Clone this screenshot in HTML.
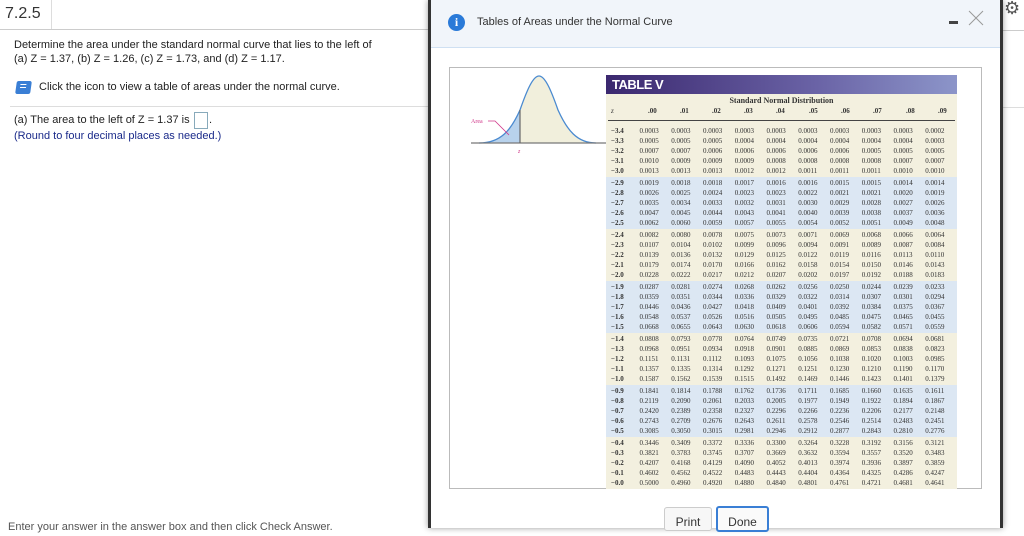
<!DOCTYPE html>
<html><head><meta charset="utf-8"><style>
*{margin:0;padding:0;box-sizing:border-box}
body{width:1024px;height:528px;overflow:hidden;background:#fff;font-family:"Liberation Sans",sans-serif;position:relative}
.a{position:absolute}
.t{font-size:11px;color:#222;white-space:nowrap}
table{border-collapse:collapse;font-family:"Liberation Serif",serif;font-size:7px;color:#333}
td{height:10px;line-height:10px;padding:0;text-align:left;width:32.2px}
td.z{width:34px;font-weight:bold;padding-left:5px}
tbody.c{background:#f3f0df}
tbody.b{background:#dce7f3}
tbody tr:first-child td{padding-top:1px}
tbody tr:last-child td{padding-bottom:1px}
</style></head><body>
<div class="a" style="left:0;top:0;width:52px;height:29px;border-right:1px solid #ddd"></div>
<div class="a" style="left:5px;top:5px;font-size:16px;color:#333">7.2.5</div>
<div class="a" style="left:0;top:29px;width:430px;height:1px;background:#ccc"></div>
<div class="a t" style="left:14px;top:39px">Determine the area under the standard normal curve that lies to the left of</div>
<div class="a t" style="left:14px;top:53px">(a) Z = 1.37, (b) Z = 1.26, (c) Z = 1.73, and (d) Z = 1.17.</div>
<div class="a" style="left:16px;top:81px;width:15px;height:13px;background:#3a7fd5;border-radius:2px;transform:skewX(-8deg)"><div style="margin:3px 0 0 4px;width:6px;height:1px;background:#fff;box-shadow:0 3px 0 #fff"></div></div>
<div class="a t" style="left:39px;top:81px">Click the icon to view a table of areas under the normal curve.</div>
<div class="a" style="left:10px;top:106px;width:420px;height:1px;background:#ddd"></div>
<div class="a t" style="left:14px;top:114px">(a) The area to the left of Z = 1.37 is</div>
<div class="a" style="left:194px;top:112px;width:14px;height:17px;border:1px solid #8ab"></div>
<div class="a t" style="left:209px;top:114px">.</div>
<div class="a t" style="left:14px;top:130px;color:#1a2a8a">(Round to four decimal places as needed.)</div>
<div class="a t" style="left:8px;top:521px;color:#555">Enter your answer in the answer box and then click Check Answer.</div>
<div class="a" style="left:1003px;top:30px;width:21px;height:1px;background:#ccc"></div>
<div class="a" style="left:1003px;top:107px;width:21px;height:1px;background:#ddd"></div>
<div class="a" style="left:1004px;top:-2px;font-size:18px;color:#555">⚙</div>
<div class="a" style="left:428px;top:0;width:575px;height:528px;background:#fff;border-left:3px solid #333;border-right:3px solid #333;box-shadow:0 0 6px rgba(0,0,0,.4)">
 <div class="a" style="left:0;top:0;width:569px;height:48px;background:#f1f5fa;border-bottom:1px solid #cfe0f2"></div>
 <div class="a" style="left:17px;top:14px;width:17px;height:17px;border-radius:50%;background:#2a7ad8;color:#fff;font:bold 12px 'Liberation Serif',serif;text-align:center;line-height:17px">i</div>
 <div class="a t" style="left:46px;top:16px;color:#333">Tables of Areas under the Normal Curve</div>
 <div class="a" style="left:518px;top:21px;width:9px;height:3px;background:#444"></div>
 <svg class="a" style="left:537px;top:10px" width="16" height="16"><path d="M1 1L15 15M15 1L1 15" stroke="#999" stroke-width="1"/></svg>
 <div class="a" style="left:18px;top:67px;width:533px;height:422px;border:1px solid #bbb"></div>
 <svg class="a" style="left:40px;top:70px" width="135" height="85">
  <path d="M8 73 C30 73,40 60,49 40 C56 20,62 6,68 6 C74 6,80 20,87 40 C96 60,106 73,125 73 Z" fill="#f1efdc" stroke="none"/>
  <path d="M8 73 C30 73,40 60,49 40 L49 73 Z" fill="#b8d2ec"/>
  <path d="M8 73 C30 73,40 60,49 40 C56 20,62 6,68 6 C74 6,80 20,87 40 C96 60,106 73,125 73" fill="none" stroke="#4a8ad0" stroke-width="1.3"/>
  <line x1="0" y1="73" x2="135" y2="73" stroke="#777" stroke-width="1.2"/>
  <line x1="49" y1="40" x2="49" y2="73" stroke="#666" stroke-width="1.2"/>
  <text x="0" y="53" font-size="6" fill="#d0388a" font-family="Liberation Serif">Area</text>
  <path d="M17 51 L24 51 L38 65" fill="none" stroke="#d0388a" stroke-width=".8"/>
  <text x="47" y="83" font-size="6" fill="#d0388a" font-style="italic" font-family="Liberation Serif">z</text>
 </svg>
 <div class="a" style="left:175px;top:75px;width:351px;height:19px;background:linear-gradient(90deg,#3b286f,#6a63a6 60%,#8c95c9);color:#fff;font:bold 13px 'Liberation Sans',sans-serif;line-height:19px;padding-left:6px;letter-spacing:-.5px">TABLE V</div>
 <div class="a" style="left:175px;top:94px;width:351px;height:394px;background:#f3f0df"></div>
 <div class="a" style="left:175px;top:96px;width:351px;text-align:center;font:bold 8px 'Liberation Serif',serif;color:#333">Standard Normal Distribution</div>
 <div class="a" style="left:175px;top:107px;width:351px;font:bold 7px 'Liberation Serif',serif;color:#333">
  <span class="a" style="left:5px;font-style:italic;font-weight:normal">z</span>
  <span class="a" style="left:42px">.00</span><span class="a" style="left:74px">.01</span><span class="a" style="left:106px">.02</span><span class="a" style="left:138px">.03</span><span class="a" style="left:170px">.04</span><span class="a" style="left:203px">.05</span><span class="a" style="left:235px">.06</span><span class="a" style="left:267px">.07</span><span class="a" style="left:300px">.08</span><span class="a" style="left:332px">.09</span>
 </div>
 <div class="a" style="left:177px;top:120px;width:347px;height:1px;background:#444"></div>
 <table class="a" style="left:175px;top:125px;width:351px">
<tbody class="c">
<tr><td class="z">−3.4</td><td>0.0003</td><td>0.0003</td><td>0.0003</td><td>0.0003</td><td>0.0003</td><td>0.0003</td><td>0.0003</td><td>0.0003</td><td>0.0003</td><td>0.0002</td></tr>
<tr><td class="z">−3.3</td><td>0.0005</td><td>0.0005</td><td>0.0005</td><td>0.0004</td><td>0.0004</td><td>0.0004</td><td>0.0004</td><td>0.0004</td><td>0.0004</td><td>0.0003</td></tr>
<tr><td class="z">−3.2</td><td>0.0007</td><td>0.0007</td><td>0.0006</td><td>0.0006</td><td>0.0006</td><td>0.0006</td><td>0.0006</td><td>0.0005</td><td>0.0005</td><td>0.0005</td></tr>
<tr><td class="z">−3.1</td><td>0.0010</td><td>0.0009</td><td>0.0009</td><td>0.0009</td><td>0.0008</td><td>0.0008</td><td>0.0008</td><td>0.0008</td><td>0.0007</td><td>0.0007</td></tr>
<tr><td class="z">−3.0</td><td>0.0013</td><td>0.0013</td><td>0.0013</td><td>0.0012</td><td>0.0012</td><td>0.0011</td><td>0.0011</td><td>0.0011</td><td>0.0010</td><td>0.0010</td></tr>
</tbody><tbody class="b">
<tr><td class="z">−2.9</td><td>0.0019</td><td>0.0018</td><td>0.0018</td><td>0.0017</td><td>0.0016</td><td>0.0016</td><td>0.0015</td><td>0.0015</td><td>0.0014</td><td>0.0014</td></tr>
<tr><td class="z">−2.8</td><td>0.0026</td><td>0.0025</td><td>0.0024</td><td>0.0023</td><td>0.0023</td><td>0.0022</td><td>0.0021</td><td>0.0021</td><td>0.0020</td><td>0.0019</td></tr>
<tr><td class="z">−2.7</td><td>0.0035</td><td>0.0034</td><td>0.0033</td><td>0.0032</td><td>0.0031</td><td>0.0030</td><td>0.0029</td><td>0.0028</td><td>0.0027</td><td>0.0026</td></tr>
<tr><td class="z">−2.6</td><td>0.0047</td><td>0.0045</td><td>0.0044</td><td>0.0043</td><td>0.0041</td><td>0.0040</td><td>0.0039</td><td>0.0038</td><td>0.0037</td><td>0.0036</td></tr>
<tr><td class="z">−2.5</td><td>0.0062</td><td>0.0060</td><td>0.0059</td><td>0.0057</td><td>0.0055</td><td>0.0054</td><td>0.0052</td><td>0.0051</td><td>0.0049</td><td>0.0048</td></tr>
</tbody><tbody class="c">
<tr><td class="z">−2.4</td><td>0.0082</td><td>0.0080</td><td>0.0078</td><td>0.0075</td><td>0.0073</td><td>0.0071</td><td>0.0069</td><td>0.0068</td><td>0.0066</td><td>0.0064</td></tr>
<tr><td class="z">−2.3</td><td>0.0107</td><td>0.0104</td><td>0.0102</td><td>0.0099</td><td>0.0096</td><td>0.0094</td><td>0.0091</td><td>0.0089</td><td>0.0087</td><td>0.0084</td></tr>
<tr><td class="z">−2.2</td><td>0.0139</td><td>0.0136</td><td>0.0132</td><td>0.0129</td><td>0.0125</td><td>0.0122</td><td>0.0119</td><td>0.0116</td><td>0.0113</td><td>0.0110</td></tr>
<tr><td class="z">−2.1</td><td>0.0179</td><td>0.0174</td><td>0.0170</td><td>0.0166</td><td>0.0162</td><td>0.0158</td><td>0.0154</td><td>0.0150</td><td>0.0146</td><td>0.0143</td></tr>
<tr><td class="z">−2.0</td><td>0.0228</td><td>0.0222</td><td>0.0217</td><td>0.0212</td><td>0.0207</td><td>0.0202</td><td>0.0197</td><td>0.0192</td><td>0.0188</td><td>0.0183</td></tr>
</tbody><tbody class="b">
<tr><td class="z">−1.9</td><td>0.0287</td><td>0.0281</td><td>0.0274</td><td>0.0268</td><td>0.0262</td><td>0.0256</td><td>0.0250</td><td>0.0244</td><td>0.0239</td><td>0.0233</td></tr>
<tr><td class="z">−1.8</td><td>0.0359</td><td>0.0351</td><td>0.0344</td><td>0.0336</td><td>0.0329</td><td>0.0322</td><td>0.0314</td><td>0.0307</td><td>0.0301</td><td>0.0294</td></tr>
<tr><td class="z">−1.7</td><td>0.0446</td><td>0.0436</td><td>0.0427</td><td>0.0418</td><td>0.0409</td><td>0.0401</td><td>0.0392</td><td>0.0384</td><td>0.0375</td><td>0.0367</td></tr>
<tr><td class="z">−1.6</td><td>0.0548</td><td>0.0537</td><td>0.0526</td><td>0.0516</td><td>0.0505</td><td>0.0495</td><td>0.0485</td><td>0.0475</td><td>0.0465</td><td>0.0455</td></tr>
<tr><td class="z">−1.5</td><td>0.0668</td><td>0.0655</td><td>0.0643</td><td>0.0630</td><td>0.0618</td><td>0.0606</td><td>0.0594</td><td>0.0582</td><td>0.0571</td><td>0.0559</td></tr>
</tbody><tbody class="c">
<tr><td class="z">−1.4</td><td>0.0808</td><td>0.0793</td><td>0.0778</td><td>0.0764</td><td>0.0749</td><td>0.0735</td><td>0.0721</td><td>0.0708</td><td>0.0694</td><td>0.0681</td></tr>
<tr><td class="z">−1.3</td><td>0.0968</td><td>0.0951</td><td>0.0934</td><td>0.0918</td><td>0.0901</td><td>0.0885</td><td>0.0869</td><td>0.0853</td><td>0.0838</td><td>0.0823</td></tr>
<tr><td class="z">−1.2</td><td>0.1151</td><td>0.1131</td><td>0.1112</td><td>0.1093</td><td>0.1075</td><td>0.1056</td><td>0.1038</td><td>0.1020</td><td>0.1003</td><td>0.0985</td></tr>
<tr><td class="z">−1.1</td><td>0.1357</td><td>0.1335</td><td>0.1314</td><td>0.1292</td><td>0.1271</td><td>0.1251</td><td>0.1230</td><td>0.1210</td><td>0.1190</td><td>0.1170</td></tr>
<tr><td class="z">−1.0</td><td>0.1587</td><td>0.1562</td><td>0.1539</td><td>0.1515</td><td>0.1492</td><td>0.1469</td><td>0.1446</td><td>0.1423</td><td>0.1401</td><td>0.1379</td></tr>
</tbody><tbody class="b">
<tr><td class="z">−0.9</td><td>0.1841</td><td>0.1814</td><td>0.1788</td><td>0.1762</td><td>0.1736</td><td>0.1711</td><td>0.1685</td><td>0.1660</td><td>0.1635</td><td>0.1611</td></tr>
<tr><td class="z">−0.8</td><td>0.2119</td><td>0.2090</td><td>0.2061</td><td>0.2033</td><td>0.2005</td><td>0.1977</td><td>0.1949</td><td>0.1922</td><td>0.1894</td><td>0.1867</td></tr>
<tr><td class="z">−0.7</td><td>0.2420</td><td>0.2389</td><td>0.2358</td><td>0.2327</td><td>0.2296</td><td>0.2266</td><td>0.2236</td><td>0.2206</td><td>0.2177</td><td>0.2148</td></tr>
<tr><td class="z">−0.6</td><td>0.2743</td><td>0.2709</td><td>0.2676</td><td>0.2643</td><td>0.2611</td><td>0.2578</td><td>0.2546</td><td>0.2514</td><td>0.2483</td><td>0.2451</td></tr>
<tr><td class="z">−0.5</td><td>0.3085</td><td>0.3050</td><td>0.3015</td><td>0.2981</td><td>0.2946</td><td>0.2912</td><td>0.2877</td><td>0.2843</td><td>0.2810</td><td>0.2776</td></tr>
</tbody><tbody class="c">
<tr><td class="z">−0.4</td><td>0.3446</td><td>0.3409</td><td>0.3372</td><td>0.3336</td><td>0.3300</td><td>0.3264</td><td>0.3228</td><td>0.3192</td><td>0.3156</td><td>0.3121</td></tr>
<tr><td class="z">−0.3</td><td>0.3821</td><td>0.3783</td><td>0.3745</td><td>0.3707</td><td>0.3669</td><td>0.3632</td><td>0.3594</td><td>0.3557</td><td>0.3520</td><td>0.3483</td></tr>
<tr><td class="z">−0.2</td><td>0.4207</td><td>0.4168</td><td>0.4129</td><td>0.4090</td><td>0.4052</td><td>0.4013</td><td>0.3974</td><td>0.3936</td><td>0.3897</td><td>0.3859</td></tr>
<tr><td class="z">−0.1</td><td>0.4602</td><td>0.4562</td><td>0.4522</td><td>0.4483</td><td>0.4443</td><td>0.4404</td><td>0.4364</td><td>0.4325</td><td>0.4286</td><td>0.4247</td></tr>
<tr><td class="z">−0.0</td><td>0.5000</td><td>0.4960</td><td>0.4920</td><td>0.4880</td><td>0.4840</td><td>0.4801</td><td>0.4761</td><td>0.4721</td><td>0.4681</td><td>0.4641</td></tr>
</tbody>
 </table>
 <div class="a" style="left:233px;top:507px;width:48px;height:24px;border:1px solid #ccc;border-radius:3px;background:#f7f7f7;font-size:12px;color:#333;text-align:center;line-height:28px">Print</div>
 <div class="a" style="left:285px;top:506px;width:53px;height:26px;border:2px solid #3a7fd5;border-radius:3px;background:#fafafa;font-size:12px;color:#333;text-align:center;line-height:28px">Done</div>
</div>
</body></html>
